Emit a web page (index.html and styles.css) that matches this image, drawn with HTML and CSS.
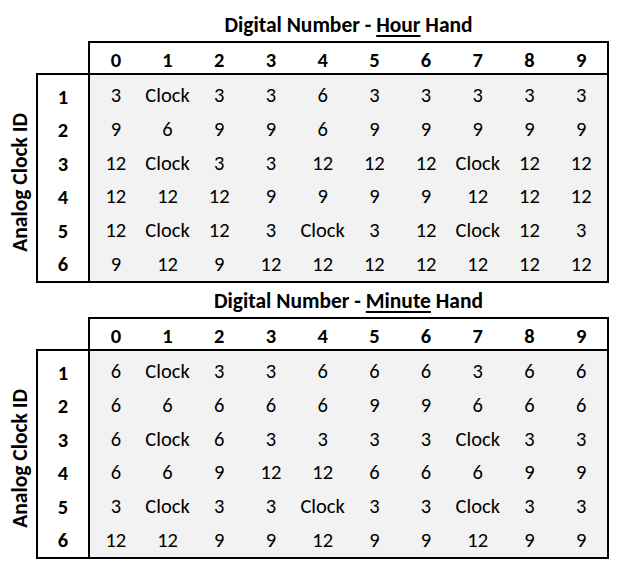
FILE: index.html
```html
<!DOCTYPE html>
<html>
<head>
<meta charset="utf-8">
<link rel="stylesheet" href="styles.css">
</head>
<body>
<section class="block">
  <div class="title"><span>Digital Number - <span class="ul">Hour</span> Hand</span></div>
  <div class="head">
    <span>0</span><span>1</span><span>2</span><span>3</span><span>4</span><span>5</span><span>6</span><span>7</span><span>8</span><span>9</span>
  </div>
  <div class="side"><span class="side-text">Analog Clock ID</span></div>
  <div class="labels"><span>1</span><span>2</span><span>3</span><span>4</span><span>5</span><span>6</span></div>
  <div class="body">
    <span>3</span><span>Clock</span><span>3</span><span>3</span><span>6</span><span>3</span><span>3</span><span>3</span><span>3</span><span>3</span>
    <span>9</span><span>6</span><span>9</span><span>9</span><span>6</span><span>9</span><span>9</span><span>9</span><span>9</span><span>9</span>
    <span>12</span><span>Clock</span><span>3</span><span>3</span><span>12</span><span>12</span><span>12</span><span>Clock</span><span>12</span><span>12</span>
    <span>12</span><span>12</span><span>12</span><span>9</span><span>9</span><span>9</span><span>9</span><span>12</span><span>12</span><span>12</span>
    <span>12</span><span>Clock</span><span>12</span><span>3</span><span>Clock</span><span>3</span><span>12</span><span>Clock</span><span>12</span><span>3</span>
    <span>9</span><span>12</span><span>9</span><span>12</span><span>12</span><span>12</span><span>12</span><span>12</span><span>12</span><span>12</span>
  </div>
</section>
<section class="block">
  <div class="title"><span>Digital Number - <span class="ul">Minute</span> Hand</span></div>
  <div class="head">
    <span>0</span><span>1</span><span>2</span><span>3</span><span>4</span><span>5</span><span>6</span><span>7</span><span>8</span><span>9</span>
  </div>
  <div class="side"><span class="side-text">Analog Clock ID</span></div>
  <div class="labels"><span>1</span><span>2</span><span>3</span><span>4</span><span>5</span><span>6</span></div>
  <div class="body">
    <span>6</span><span>Clock</span><span>3</span><span>3</span><span>6</span><span>6</span><span>6</span><span>3</span><span>6</span><span>6</span>
    <span>6</span><span>6</span><span>6</span><span>6</span><span>6</span><span>9</span><span>9</span><span>6</span><span>6</span><span>6</span>
    <span>6</span><span>Clock</span><span>6</span><span>3</span><span>3</span><span>3</span><span>3</span><span>Clock</span><span>3</span><span>3</span>
    <span>6</span><span>6</span><span>9</span><span>12</span><span>12</span><span>6</span><span>6</span><span>6</span><span>9</span><span>9</span>
    <span>3</span><span>Clock</span><span>3</span><span>3</span><span>Clock</span><span>3</span><span>3</span><span>Clock</span><span>3</span><span>3</span>
    <span>12</span><span>12</span><span>9</span><span>9</span><span>12</span><span>9</span><span>9</span><span>12</span><span>9</span><span>9</span>
  </div>
</section>
</body>
</html>
```
FILE: styles.css
```css
html, body {
  margin: 0;
  padding: 0;
  background: #ffffff;
}
body {
  padding-top: 7px;
  font-family: Carlito, Lato, "Liberation Sans", sans-serif;
  font-size: 20.5px;
  color: #000;
}
.block {
  display: grid;
  grid-template-columns: 36px 52px 521px;
  grid-template-rows: 34px 34px 208px;
}
.title {
  grid-column: 3;
  grid-row: 1;
  display: flex;
  align-items: center;
  justify-content: center;
  font-weight: bold;
  font-size: 21.5px;
  padding-top: 2px;
  white-space: pre;
}
.ul {
  text-decoration: underline;
  text-underline-offset: 3px;
  text-decoration-thickness: 2px;
}
.head {
  grid-column: 3;
  grid-row: 2;
  box-sizing: border-box;
  border: 2px solid #000;
  display: grid;
  grid-template-columns: repeat(10, 1fr);
  align-items: center;
  font-weight: bold;
  background: #fff;
  padding-top: 3px;
}
.head span, .body span, .labels span {
  text-align: center;
}
.side {
  grid-column: 1;
  grid-row: 3;
  display: flex;
  align-items: center;
  justify-content: center;
  font-weight: bold;
  font-size: 21.5px;
  padding-left: 4px;
  padding-top: 6px;
}
.side-text {
  writing-mode: vertical-rl;
  transform: rotate(180deg);
  white-space: nowrap;
}
.labels {
  grid-column: 2;
  grid-row: 3;
  margin-top: -2px;
  box-sizing: border-box;
  border: 2px solid #000;
  border-right: none;
  display: grid;
  grid-template-rows: repeat(6, 1fr);
  align-items: center;
  font-weight: bold;
  padding-top: 5px;
}
.body {
  grid-column: 3;
  grid-row: 3;
  box-sizing: border-box;
  border: 2px solid #000;
  border-top: none;
  background: #f2f2f2;
  display: grid;
  grid-template-columns: repeat(10, 1fr);
  grid-template-rows: repeat(6, 1fr);
  align-items: center;
  padding-top: 3px;
}
```
